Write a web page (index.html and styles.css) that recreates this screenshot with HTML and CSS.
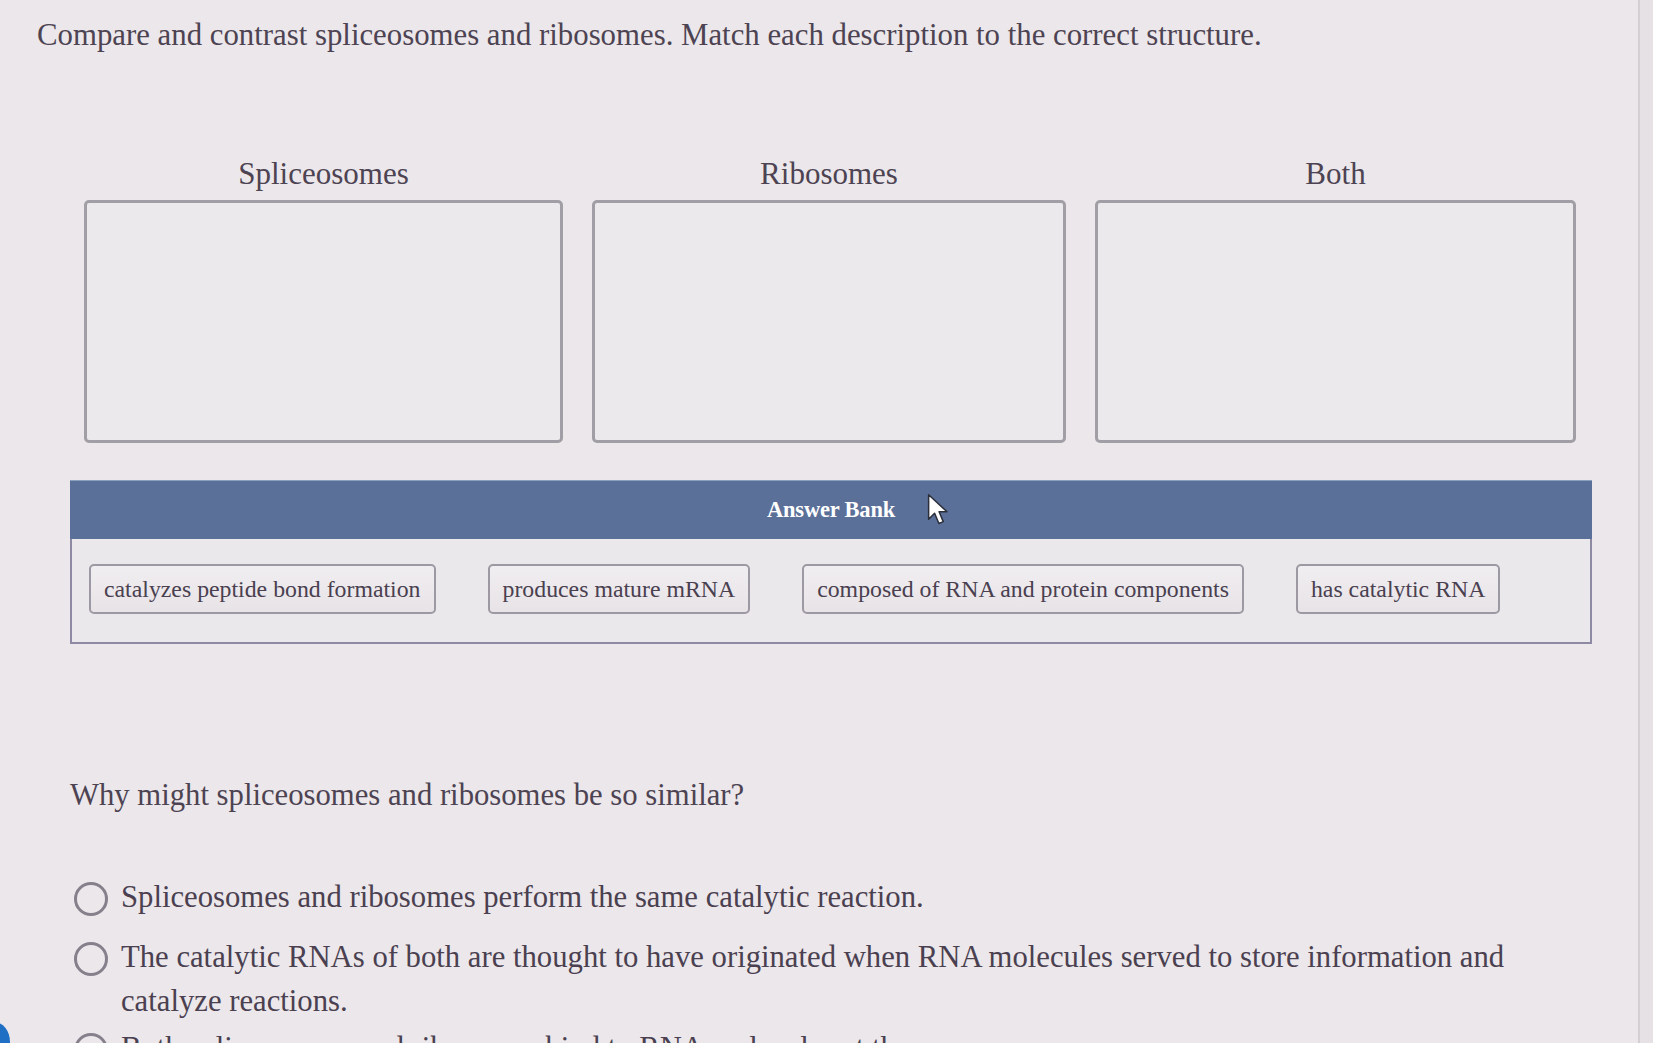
FILE: index.html
```html
<!DOCTYPE html>
<html lang="en">
<head>
<meta charset="utf-8">
<title>Spliceosomes and ribosomes</title>
<link rel="stylesheet" href="styles.css">
</head>
<body>
<div class="page">
  <main class="content">
    <h1 class="prompt">Compare and contrast spliceosomes and ribosomes. Match each description to the correct structure.</h1>

    <section class="targets">
      <div class="target">
        <div class="target-label">Spliceosomes</div>
        <div class="drop"></div>
      </div>
      <div class="target">
        <div class="target-label">Ribosomes</div>
        <div class="drop"></div>
      </div>
      <div class="target">
        <div class="target-label">Both</div>
        <div class="drop"></div>
      </div>
    </section>

    <section class="bank">
      <div class="bank-head">
        <span class="bank-title">Answer Bank</span>
        <svg class="cursor" width="26" height="35" viewBox="0 0 24 32" aria-hidden="true">
          <path d="M1.5 1.5 L1.5 24 L7 18.5 L11 28 L15 26.3 L11.2 17.2 L18.5 17.2 Z" fill="#ffffff" stroke="#2b2f3a" stroke-width="1.4" stroke-linejoin="round"/>
        </svg>
      </div>
      <div class="bank-body">
        <div class="chip">catalyzes peptide bond formation</div>
        <div class="chip">produces mature mRNA</div>
        <div class="chip">composed of RNA and protein components</div>
        <div class="chip">has catalytic RNA</div>
      </div>
    </section>

    <section class="question">
      <p class="q-text">Why might spliceosomes and ribosomes be so similar?</p>
      <ul class="options">
        <li class="option option-first"><span class="radio"></span><span class="opt-text">Spliceosomes and ribosomes perform the same catalytic reaction.</span></li>
        <li class="option"><span class="radio"></span><span class="opt-text">The catalytic RNAs of both are thought to have originated when RNA molecules served to store information and catalyze reactions.</span></li>
        <li class="option"><span class="radio"></span><span class="opt-text">Both spliceosomes and ribosomes bind to RNA molecules at the same sequences.</span></li>
      </ul>
    </section>
  </main>
  <aside class="edge"></aside>
</div>
<div class="fab"></div>
</body>
</html>
```

FILE: styles.css
```css
html, body {
  margin: 0;
  padding: 0;
  height: 100%;
  overflow: hidden;
}

body {
  background: #ebe7ea;
  font-family: "Liberation Serif", Tinos, "Times New Roman", Times, serif;
  color: #4a4050;
  position: relative;
}

.page {
  display: flex;
  height: 100%;
}

.content {
  width: 1638px;
  flex: none;
}

.edge {
  flex: 1;
  background: #e5e1e4;
  border-left: 2px solid #d3cfd3;
}

.prompt {
  margin: 0;
  padding: 17px 0 0 37px;
  font-size: 30.8px;
  font-weight: normal;
  line-height: 36px;
  color: #4d4352;
}

.targets {
  display: grid;
  grid-template-columns: 479px 474px 481px;
  column-gap: 29px;
  margin: 103px 0 0 84px;
  width: 1493px;
}

.target {
  display: flex;
  flex-direction: column;
  align-items: center;
}

.target-label {
  font-size: 31px;
  line-height: 36px;
  color: #4d4352;
}

.drop {
  margin-top: 8px;
  align-self: stretch;
  height: 237px;
  border: 3px solid #a29ea6;
  border-radius: 5px;
  background: #ece9ec;
}

.bank {
  margin: 37px 0 0 70px;
  width: 1522px;
}

.bank-head {
  position: relative;
  height: 58px;
  background: #5b7099;
  border-top: 1px solid #8aa0bd;
  display: flex;
  align-items: center;
  justify-content: center;
}

.bank-title {
  color: #ffffff;
  font-weight: bold;
  font-size: 22.5px;
  letter-spacing: -0.2px;
}

.cursor {
  position: absolute;
  left: 857px;
  top: 12px;
}

.bank-body {
  display: flex;
  align-items: center;
  gap: 52px;
  padding: 25px 0 28px 17px;
  background: #ebe8eb;
  border: 2px solid #8f8aa3;
  border-top: none;
}

.chip {
  height: 46px;
  display: flex;
  align-items: center;
  padding: 0 13px;
  border: 2px solid #9d99a3;
  border-radius: 5px;
  background: linear-gradient(#f1eef1, #e7e3e7);
  font-size: 23.8px;
  color: #4a4050;
  white-space: nowrap;
}

.question {
  margin: 133px 0 0 0;
}

.q-text {
  margin: 0 0 0 70px;
  font-size: 30.7px;
  line-height: 36px;
  color: #4d4352;
}

.options {
  list-style: none;
  margin: 62px 0 0 74px;
  padding: 0;
  display: flex;
  flex-direction: column;
  gap: 3px;
  width: 1500px;
}

.option {
  display: flex;
  align-items: flex-start;
  gap: 13px;
  font-size: 30.7px;
  line-height: 44px;
  color: #4a4050;
}

.option-first {
  margin-bottom: 13px;
}

.radio {
  flex: none;
  width: 28px;
  height: 28px;
  margin-top: 7px;
  border: 3px solid #85808b;
  border-radius: 50%;
}

.fab {
  position: absolute;
  left: -22px;
  top: 1022px;
  width: 32px;
  height: 40px;
  border-radius: 50%;
  background: #1f6fc4;
}
```
